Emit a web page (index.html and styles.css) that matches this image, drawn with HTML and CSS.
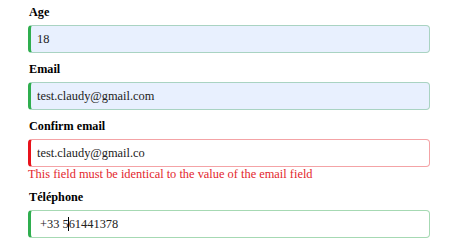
FILE: index.html
```html
<!DOCTYPE html>
<html lang="fr">
<head>
<meta charset="utf-8">
<link rel="stylesheet" href="styles.css">
</head>
<body>
<form class="form">
  <div class="field">
    <label class="label" for="age">Age</label>
    <input class="input valid autofill" id="age" type="text" value="18">
  </div>
  <div class="field">
    <label class="label" for="email">Email</label>
    <input class="input valid autofill" id="email" type="text" value="test.claudy@gmail.com">
  </div>
  <div class="field">
    <label class="label" for="confirm">Confirm email</label>
    <input class="input invalid" id="confirm" type="text" value="test.claudy@gmail.co">
    <div class="error">This field must be identical to the value of the email field</div>
  </div>
  <div class="field">
    <label class="label" for="tel">Téléphone</label>
    <div class="input-wrap">
      <input class="input valid tel" id="tel" type="text" value="+33 561441378">
      <span class="caret"></span>
    </div>
  </div>
</form>
</body>
</html>
```
FILE: styles.css
```css
html, body {
  margin: 0;
  padding: 0;
  background: #ffffff;
}
body {
  font-family: "Liberation Serif", "Times New Roman", serif;
  color: #000;
  overflow: hidden;
}
.form {
  width: 402px;
  padding: 5px 0 0 28px;
  display: flex;
  flex-direction: column;
  gap: 9px;
}
.field {
  display: flex;
  flex-direction: column;
}
.label {
  font-family: "Liberation Serif", "Times New Roman", serif;
  font-weight: bold;
  font-size: 12.2px;
  line-height: 15px;
  margin-bottom: 5px;
  padding-left: 1px;
}
.input {
  box-sizing: border-box;
  width: 402px;
  height: 28px;
  margin: 0;
  padding: 0 0 0 6px;
  font-family: "Liberation Serif", "Times New Roman", serif;
  font-size: 12.4px;
  color: #222;
  background: #fff;
  border: 1px solid;
  border-left-width: 3px;
  border-radius: 4px;
  outline: none;
}
.tel {
  padding-left: 9px;
}
.valid {
  border-color: #a6d9b3;
  border-left-color: #2fae4f;
}
.invalid {
  border-color: #f4a3a6;
  border-left-color: #e8131c;
}
.autofill {
  background: #e8f0fe;
  border-color: #a9d3c2;
  border-left-color: #2fae4f;
}
.error {
  font-family: "Liberation Serif", "Times New Roman", serif;
  color: #e3262d;
  font-size: 12.4px;
  line-height: 14px;
}
.input-wrap {
  position: relative;
}
.caret {
  position: absolute;
  left: 40px;
  top: 7px;
  width: 1px;
  height: 14px;
  background: #000;
}
```
